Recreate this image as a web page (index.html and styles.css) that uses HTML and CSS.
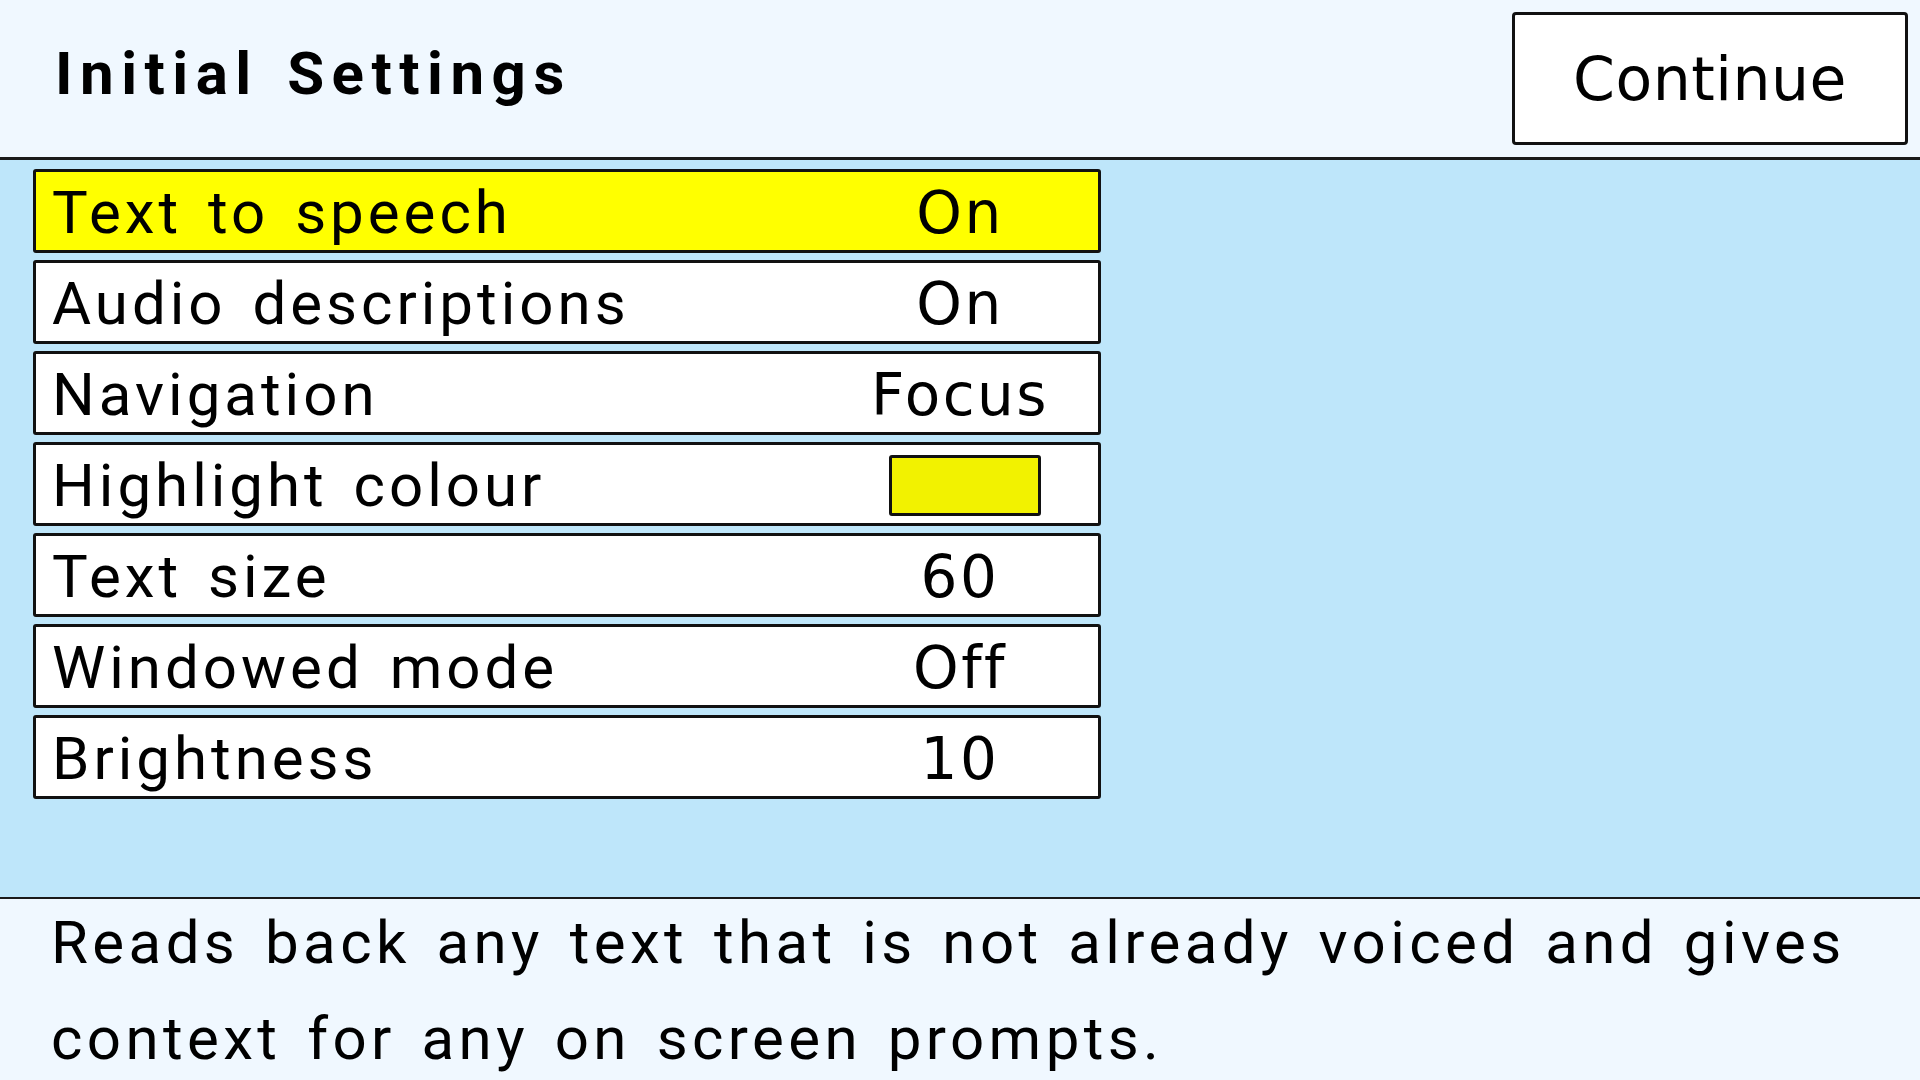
FILE: index.html
```html
<!DOCTYPE html>
<html lang="en">
<head>
  <meta charset="UTF-8" />
  <title>Initial Settings</title>
  <link rel="stylesheet" href="styles.css">
</head>
<body>

  <header class="top-bar">
    <h1 class="title">Initial Settings</h1>
    <button class="continue-btn">Continue</button>
  </header>

  <main class="settings">
    <ul class="setting-list">
      <li class="setting selected"><span class="label">Text to speech</span><span class="value">On</span></li>
      <li class="setting"><span class="label">Audio descriptions</span><span class="value">On</span></li>
      <li class="setting"><span class="label">Navigation</span><span class="value">Focus</span></li>
      <li class="setting"><span class="label">Highlight colour</span><span class="value"><span class="swatch"></span></span></li>
      <li class="setting"><span class="label">Text size</span><span class="value">60</span></li>
      <li class="setting"><span class="label">Windowed mode</span><span class="value">Off</span></li>
      <li class="setting"><span class="label">Brightness</span><span class="value">10</span></li>
    </ul>
  </main>

  <footer class="description">
    <p>Reads back any text that is not already voiced and gives context for any on screen prompts.</p>
  </footer>

</body>
</html>
```

FILE: styles.css
```css
html, body {
  margin: 0;
  height: 100%;
}

body {
  display: flex;
  flex-direction: column;
  font-family: Roboto, 'Liberation Sans', sans-serif;
  color: #000;
  background-color: #f0f8ff;
}

.top-bar {
  height: 157px;
  flex-shrink: 0;
  display: flex;
  justify-content: space-between;
  align-items: flex-start;
  border-bottom: 3px solid #1a1a1a;
  background-color: #f0f8ff;
}

.title {
  margin: 38px 0 0 55px;
  font-size: 60px;
  font-weight: bold;
  letter-spacing: 7.5px;
  word-spacing: 6px;
}

.continue-btn {
  width: 396px;
  height: 133px;
  margin: 12px 12px 0 0;
  padding: 0;
  background-color: #fff;
  border: 3px solid #111;
  border-radius: 4px;
  color: #000;
  font-family: 'DejaVu Sans', sans-serif;
  font-size: 60px;
  letter-spacing: 0.5px;
}

.settings {
  flex: 1;
  background-color: #bee6fa;
  padding: 9px 0 0 33px;
}

.setting-list {
  list-style: none;
  margin: 0;
  padding: 0;
  width: 1068px;
  display: flex;
  flex-direction: column;
  gap: 7px;
}

.setting {
  height: 84px;
  box-sizing: border-box;
  display: flex;
  align-items: center;
  padding: 3px 0 0 16px;
  background-color: #fff;
  border: 3px solid #111;
  border-radius: 3px;
  font-size: 60px;
}

.setting.selected {
  background-color: #ffff00;
}

.label {
  flex: 1;
  letter-spacing: 4px;
  word-spacing: 7px;
}

.value {
  width: 240px;
  margin-right: 18px;
  display: flex;
  justify-content: center;
  align-items: center;
  font-family: 'DejaVu Sans', sans-serif;
  font-size: 58px;
  letter-spacing: 2.5px;
}

.swatch {
  width: 152px;
  height: 61px;
  margin-left: 10px;
  box-sizing: border-box;
  background-color: #f2f200;
  border: 3px solid #111;
  border-radius: 3px;
}

.description {
  height: 181px;
  flex-shrink: 0;
  border-top: 2px solid #1a1a1a;
  background-color: #f0f8ff;
  overflow: hidden;
}

.description p {
  margin: -4px 0 0 51px;
  font-size: 60px;
  line-height: 96px;
  letter-spacing: 4.4px;
  word-spacing: 6.5px;
}
```
